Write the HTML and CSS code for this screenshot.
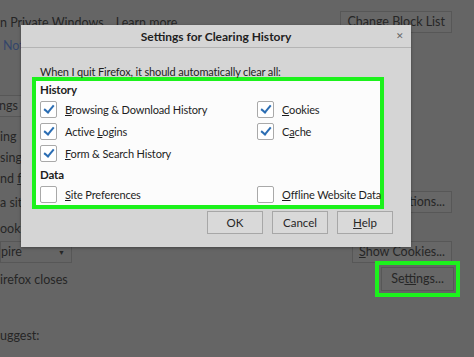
FILE: index.html
```html
<!DOCTYPE html>
<html lang="en">

<head>
    <meta charset="UTF-8">
    <meta name="viewport" content="width=device-width, initial-scale=1.0">
    <title>Settings for Clearing History</title>
    <link rel="stylesheet" href="styles.css">
</head>

<body>
    <div class="page">
        <div class="row row-top">
            <span class="bg-text">n Private Windows</span>
            <span class="bg-text link">Learn more</span>
            <span class="spacer"></span>
            <span class="bg-btn">Change Block List</span>
        </div>
        <div class="row row-notify">
            <span class="bg-text blue">Not</span>
        </div>
        <div class="row row-ngs">
            <span class="bg-btn cut">ngs</span>
        </div>
        <div class="row row-line"><span class="bg-text">ing</span></div>
        <div class="row row-line"><span class="bg-text">sing</span></div>
        <div class="row row-line"><span class="bg-text">nd <u>f</u>o</span></div>
        <div class="row row-options">
            <span class="bg-text">a site</span>
            <span class="spacer"></span>
            <span class="bg-btn">Exceptions...</span>
        </div>
        <div class="row row-cookies">
            <span class="bg-text">ooki</span>
        </div>
        <div class="row row-keep">
            <span class="bg-select">pire <span class="caret">&#9660;</span></span>
            <span class="spacer"></span>
            <span class="bg-btn"><u>S</u>how Cookies...</span>
        </div>
        <div class="row row-closes">
            <span class="bg-text">irefox closes</span>
            <span class="spacer"></span>
            <span class="bg-btn highlight">Se<u>t</u>tings...</span>
        </div>
        <div class="row row-suggest">
            <span class="bg-text">uggest:</span>
        </div>
    </div>

    <div class="dialog">
        <div class="dialog-title">
            <span>Settings for Clearing History</span>
            <span class="close">&#10005;</span>
        </div>
        <div class="dialog-body">
            <p class="intro">When I quit Firefox, it should automatically clear all:</p>
            <div class="choices">
                <div class="group-title">History</div>
                <div class="grid">
                    <label class="check on"><span class="box"></span><span><u>B</u>rowsing &amp; Download History</span></label>
                    <label class="check on"><span class="box"></span><span><u>C</u>ookies</span></label>
                    <label class="check on"><span class="box"></span><span>Active <u>L</u>ogins</span></label>
                    <label class="check on"><span class="box"></span><span>C<u>a</u>che</span></label>
                    <label class="check on"><span class="box"></span><span><u>F</u>orm &amp; Search History</span></label>
                    <span></span>
                </div>
                <div class="group-title data">Data</div>
                <div class="grid">
                    <label class="check"><span class="box"></span><span><u>S</u>ite Preferences</span></label>
                    <label class="check"><span class="box"></span><span><u>O</u>ffline Website Data</span></label>
                </div>
            </div>
            <div class="buttons">
                <button>OK</button>
                <button>Cancel</button>
                <button><u>H</u>elp</button>
            </div>
        </div>
    </div>
</body>

</html>
```

FILE: styles.css
```css
body {
    margin: 0;
    width: 474px;
    height: 357px;
    overflow: hidden;
    position: relative;
    background: #656565;
    font-family: Lato, "Noto Sans", sans-serif;
    color: #262626;
}

/* dimmed preferences page behind the dialog */
.page {
    display: flex;
    flex-direction: column;
    padding-right: 22px;
}

.row {
    display: flex;
    align-items: center;
    font-size: 12.5px;
}

.spacer {
    flex: 1;
}

.bg-text {
    white-space: nowrap;
}

.link {
    margin-left: 12px;
    text-decoration: underline;
}

.blue {
    color: #34456a;
    margin-left: 3px;
}

.bg-btn {
    border: 1px solid #575757;
    background: #676767;
    padding: 1px 6px;
    white-space: nowrap;
    line-height: 18px;
}

.bg-btn.cut {
    margin-left: -8px;
    padding-right: 4px;
}

.row-top {
    height: 20px;
    margin-top: 12px;
}

.row-notify {
    height: 22px;
    margin-top: 2px;
}

.row-ngs {
    margin-top: 39px;
    height: 22px;
}

.row-line {
    height: 21px;
}

.row-ngs + .row-line {
    margin-top: 9px;
}

.row-options {
    height: 24px;
    margin-top: 1px;
}

.row-cookies {
    height: 24px;
    margin-top: 2px;
}

.row-keep {
    height: 22px;
    margin-top: 1px;
}

.bg-select {
    width: 64px;
    border: 1px solid #575757;
    padding: 1px 6px 1px 0;
    line-height: 18px;
    display: flex;
    justify-content: space-between;
}

.caret {
    font-size: 7px;
    line-height: 18px;
}

.row-closes {
    height: 24px;
    margin-top: 4px;
}

.highlight {
    width: 73px;
    box-sizing: border-box;
    text-align: center;
    padding: 2px 0;
    margin-right: -2px;
    outline: 4px solid #1cf21c;
    outline-offset: 2px;
}

.row-suggest {
    margin-top: 34px;
    height: 20px;
}

/* the modal dialog */
.dialog {
    position: absolute;
    left: 21px;
    top: 25px;
    width: 390px;
    height: 222px;
    background: #d5d5d5;
    box-shadow: 0 1px 3px rgba(0, 0, 0, 0.35);
    font-size: 11px;
    letter-spacing: -0.15px;
    color: #1e1e1e;
}

.dialog-title {
    height: 22px;
    border-bottom: 1px solid #b4b4b4;
    display: flex;
    align-items: center;
    justify-content: center;
    position: relative;
    font-weight: bold;
    font-size: 12px;
    letter-spacing: 0;
}

.close {
    position: absolute;
    right: 7px;
    top: 5px;
    font-size: 9px;
    font-weight: normal;
    color: #666;
}

.dialog-body {
    padding: 18px 18px 0 11px;
}

.intro {
    margin: 0 0 0 8px;
    line-height: 11px;
    white-space: nowrap;
}

.choices {
    width: 340px;
    border: 4px solid #1cf21c;
    background: #fcfcfc;
    padding: 1px 0 0 4px;
    height: 123px;
}

.group-title {
    font-weight: bold;
    font-size: 11.5px;
    line-height: 16px;
}

.group-title.data {
    margin-top: 3px;
}

.grid {
    display: grid;
    grid-template-columns: 217px 1fr;
    grid-auto-rows: 22px;
}

.check {
    display: flex;
    align-items: center;
    gap: 8px;
    white-space: nowrap;
}

.box {
    width: 15px;
    height: 15px;
    border: 1px solid #a9a9a9;
    border-radius: 2px;
    background: #fff;
    display: flex;
    align-items: center;
    justify-content: center;
    flex: none;
}

.check.on .box::after {
    content: "";
    width: 4px;
    height: 8px;
    border-right: 2px solid #2b6db3;
    border-bottom: 2px solid #2b6db3;
    transform: rotate(40deg);
    margin-top: -3px;
}

.buttons {
    display: flex;
    justify-content: flex-end;
    gap: 9px;
    margin-top: 2px;
}

button {
    width: 56px;
    height: 23px;
    border: 1px solid #a7a7a7;
    background: #d9d9d9;
    font-family: inherit;
    font-size: 11.5px;
    color: #262626;
    padding: 0;
}
```
